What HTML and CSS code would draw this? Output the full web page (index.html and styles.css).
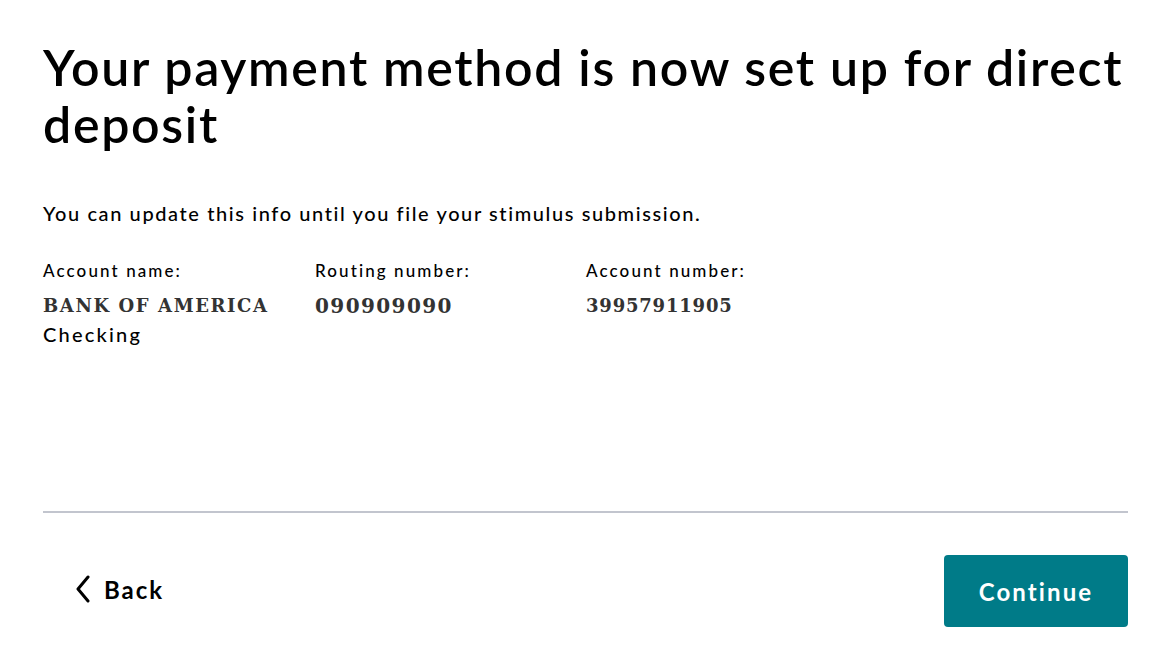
FILE: index.html
```html
<!DOCTYPE html>
<html lang="en">
<head>
<meta charset="utf-8">
<title>Direct deposit</title>
<link rel="stylesheet" href="styles.css">
</head>
<body>
<main class="page">
  <h1 class="title">Your payment method is now set up for direct deposit</h1>
  <p class="sub">You can update this info until you file your stimulus submission.</p>
  <div class="details">
    <div class="col">
      <div class="label">Account name:</div>
      <div class="value">BANK OF AMERICA</div>
      <div class="kind">Checking</div>
    </div>
    <div class="col">
      <div class="label">Routing number:</div>
      <div class="value value-routing">090909090</div>
    </div>
    <div class="col">
      <div class="label">Account number:</div>
      <div class="value value-account">39957911905</div>
    </div>
  </div>
  <div class="spacer"></div>
  <hr class="divider">
  <div class="actions">
    <button class="back" type="button">
      <svg width="16" height="28" viewBox="0 0 16 28" aria-hidden="true"><path d="M13 2 L3 14 L13 26" fill="none" stroke="#000" stroke-width="3" stroke-linecap="round" stroke-linejoin="round"/></svg>
      <span>Back</span>
    </button>
    <button class="continue" type="button">Continue</button>
  </div>
</main>
</body>
</html>
```
FILE: styles.css
```css
html, body {
  margin: 0;
  padding: 0;
  background: #fff;
}
body {
  font-family: Lato, "Open Sans", sans-serif;
  color: #000;
}
.page {
  width: 1085px;
  margin: 0 0 0 43px;
  padding-top: 39px;
  display: flex;
  flex-direction: column;
  height: 667px;
  box-sizing: border-box;
}
.title {
  margin: 0;
  font-size: 50px;
  font-weight: 600;
  line-height: 57px;
  letter-spacing: 1.7px;
}
.sub {
  margin: 48px 0 0;
  font-size: 20px;
  font-weight: 500;
  line-height: 24px;
  letter-spacing: 1.6px;
}
.details {
  display: grid;
  grid-template-columns: 272px 271px 272px;
  margin-top: 35px;
}
.label {
  font-size: 17px;
  font-weight: 500;
  line-height: 22px;
  letter-spacing: 2.1px;
}
.value {
  font-family: "DejaVu Serif", "Liberation Serif", serif;
  font-weight: bold;
  font-size: 18px;
  letter-spacing: 1.6px;
  color: #333;
  margin-top: 12px;
  line-height: 24px;
}
.value-routing {
  font-size: 20px;
  letter-spacing: 1.4px;
}
.value-account {
  letter-spacing: 0.8px;
}
.kind {
  font-size: 20px;
  font-weight: 500;
  line-height: 26px;
  margin-top: 3px;
  letter-spacing: 2.2px;
}
.spacer {
  height: 164px;
}
.divider {
  margin: 0;
  border: 0;
  height: 2px;
  background: #c2c5ce;
}
.actions {
  display: flex;
  justify-content: space-between;
  align-items: center;
  margin-top: 42px;
}
.back {
  display: flex;
  align-items: center;
  gap: 13px;
  background: none;
  border: 0;
  padding: 0 0 0 32px;
  font-family: Lato, "Open Sans", sans-serif;
  font-weight: bold;
  font-size: 24px;
  letter-spacing: 2px;
  color: #000;
  cursor: pointer;
  margin-top: -4px;
}
.continue {
  width: 184px;
  height: 72px;
  border: 0;
  border-radius: 4px;
  background: #007b88;
  color: #fff;
  font-family: Lato, "Open Sans", sans-serif;
  font-weight: bold;
  font-size: 24px;
  letter-spacing: 2.1px;
  cursor: pointer;
}
```
